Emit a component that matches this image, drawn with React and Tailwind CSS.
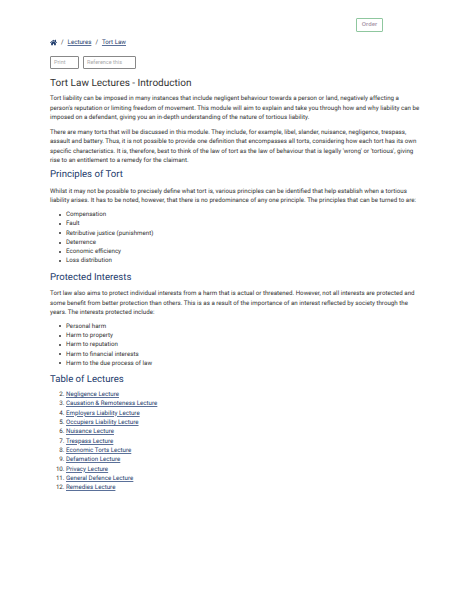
import { FaHome } from "react-icons/fa"

const lectures = [
  "Negligence Lecture",
  "Causation & Remoteness Lecture",
  "Employers Liability Lecture",
  "Occupiers Liability Lecture",
  "Nuisance Lecture",
  "Trespass Lecture",
  "Economic Torts Lecture",
  "Defamation Lecture",
  "Privacy Lecture",
  "General Defence Lecture",
  "Remedies Lecture",
]

const principles = [
  "Compensation",
  "Fault",
  "Retributive justice (punishment)",
  "Deterrence",
  "Economic efficiency",
  "Loss distribution",
]

const interests = [
  "Personal harm",
  "Harm to property",
  "Harm to reputation",
  "Harm to financial interests",
  "Harm to the due process of law",
]

function Heading({ children }) {
  return <h2 className="text-[9.6px] leading-[13px] text-[#1c3a6b] mb-[5.5px]">{children}</h2>
}

function BulletList({ items }) {
  return (
    <ul className="pl-[9px] mb-[5px]">
      {items.map((item) => (
        <li key={item} className="flex items-center gap-[5px]">
          <span className="w-[2px] h-[2px] rounded-full bg-[#333]" />
          {item}
        </li>
      ))}
    </ul>
  )
}

export default function App() {
  return (
    <div className="min-h-[613px] bg-white pl-[50px] pr-[53px] font-['Roboto',sans-serif] [text-rendering:geometricPrecision] text-[6.2px] leading-[9.3px] text-[#333]">
      <div className="flex justify-end pt-[18px] pr-[38px]">
        <button className="w-[27px] h-[14px] border-[1.5px] border-[#8fc79f] rounded-[1px] text-[6.2px] font-medium text-[#a897a8]">Order</button>
      </div>

      <div className="flex items-center gap-[4px] mt-[6px]">
        <FaHome className="text-[#1c3a6b] text-[7px]" />
        <span>/</span>
        <a className="underline decoration-[#5a7099] text-[#1c3a6b]">Lectures</a>
        <span>/</span>
        <a className="underline decoration-[#5a7099] text-[#1c3a6b]">Tort Law</a>
      </div>

      <div className="flex gap-[4px] mt-[9px]">
        <button className="w-[29px] h-[13px] border-[1.5px] border-[#888] rounded-[1px] text-left pl-[3px] text-[5.5px] text-[#aaa]">Print</button>
        <button className="w-[53px] h-[13px] border-[1.5px] border-[#888] rounded-[1px] text-left pl-[3px] text-[5.5px] text-[#aaa]">Reference this</button>
      </div>

      <h1 className="text-[10px] leading-[15px] text-[#333] mt-[7px] mb-[3px]">Tort Law Lectures - Introduction</h1>

      <p className="mb-[6px]">
        Tort liability can be imposed in many instances that include negligent behaviour towards a person or land, negatively affecting a person's reputation or limiting freedom of movement. This module will aim to explain and take you through how and why liability can be imposed on a defendant, giving you an in-depth understanding of the nature of tortious liability.
      </p>
      <p className="mb-[3px]">
        There are many torts that will be discussed in this module. They include, for example, libel, slander, nuisance, negligence, trespass, assault and battery. Thus, it is not possible to provide one definition that encompasses all torts, considering how each tort has its own specific characteristics. It is, therefore, best to think of the law of tort as the law of behaviour that is legally 'wrong' or 'tortious', giving rise to an entitlement to a remedy for the claimant.
      </p>

      <Heading>Principles of Tort</Heading>
      <p className="mb-[4.5px]">
        Whilst it may not be possible to precisely define what tort is, various principles can be identified that help establish when a tortious liability arises. It has to be noted, however, that there is no predominance of any one principle. The principles that can be turned to are:
      </p>
      <BulletList items={principles} />

      <Heading>Protected Interests</Heading>
      <p className="mb-[4.5px]">
        Tort law also aims to protect individual interests from a harm that is actual or threatened. However, not all interests are protected and some benefit from better protection than others. This is as a result of the importance of an interest reflected by society through the years. The interests protected include:
      </p>
      <BulletList items={interests} />

      <Heading>Table of Lectures</Heading>
      <ol start={2} className="list-decimal pl-[16px] -mt-[1.5px]">
        {lectures.map((item) => (
          <li key={item}>
            <a className="underline decoration-[#5a7099] text-[#1c3a6b]">{item}</a>
          </li>
        ))}
      </ol>
    </div>
  )
}
